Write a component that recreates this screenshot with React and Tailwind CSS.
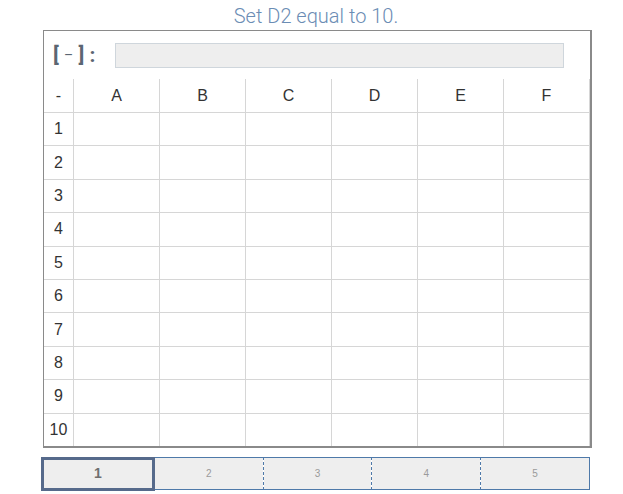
const cols = ['A', 'B', 'C', 'D', 'E', 'F']
const rows = [1, 2, 3, 4, 5, 6, 7, 8, 9, 10]

export default function App() {
  return (
    <div className="w-[623px] h-[494px] bg-white" style={{ fontFamily: '"Liberation Sans", Arial, sans-serif' }}>
      {/* Prompt */}
      <div className="h-[30px] flex items-center justify-center pl-[9px] pt-[2px] text-[20px] font-light text-[#6b8cb4]"
        style={{ fontFamily: 'Roboto, "Liberation Sans", sans-serif' }}>
        Set D2 equal to 10.
      </div>

      {/* Sheet */}
      <div className="ml-[43px] w-[549px] border-t border-l border-r-2 border-b-2 border-[#8a8a8a]">
        <div className="h-[48px] flex items-center pl-[9px] pr-[26px]">
          <span className="w-[62px] text-[21px] font-bold text-[#5b6672] leading-none whitespace-pre"
            style={{ fontFamily: 'Roboto, "Liberation Sans", sans-serif' }}>
            [ <span className="font-normal text-[14px] align-[2px]">–</span> ] :
          </span>
          <div className="flex-1 h-[25px] bg-[#eeeeee] border border-[#cfd6dc]" />
        </div>

        <div className="grid grid-cols-[30px_repeat(6,86px)]">
          <div className="h-[33px] flex items-center justify-center text-[16px] text-[#333] border-r border-[#d6d6d6]">-</div>
          {cols.map(c => (
            <div key={c} className="h-[33px] flex items-center justify-center text-[16px] text-[#333] border-r border-[#d6d6d6]">{c}</div>
          ))}
          {rows.map(r => (
            <Row key={r} n={r} />
          ))}
        </div>
      </div>

      {/* Page tabs */}
      <div className="ml-[41px] mt-[9px] w-[549px] h-[34px] flex text-[#9a9a9a]">
        <div className="flex-1 flex items-center justify-center bg-[#eeeeee] border-[3px] border-[#566a8b] text-[14px] font-bold text-[#6f6f6f]">1</div>
        {[2, 3, 4, 5].map(p => (
          <div key={p} className="contents">
            {p > 2 && <div className="h-[33px] w-0 border-l border-dashed border-[#4e79a9]" />}
            <div className={`flex-1 h-[33px] flex items-center justify-center bg-[#eeeeee] border-y border-[#4e79a9] text-[10px] ${p === 5 ? 'border-r' : ''}`}>{p}</div>
          </div>
        ))}
      </div>
    </div>
  )
}

function Row({ n }) {
  return (
    <>
      <div className="h-[33.4px] flex items-center justify-center text-[16px] text-[#333] border-t border-r border-[#d6d6d6]">{n}</div>
      {cols.map(c => (
        <div key={c} className="h-[33.4px] border-t border-r border-[#d6d6d6]" />
      ))}
    </>
  )
}
